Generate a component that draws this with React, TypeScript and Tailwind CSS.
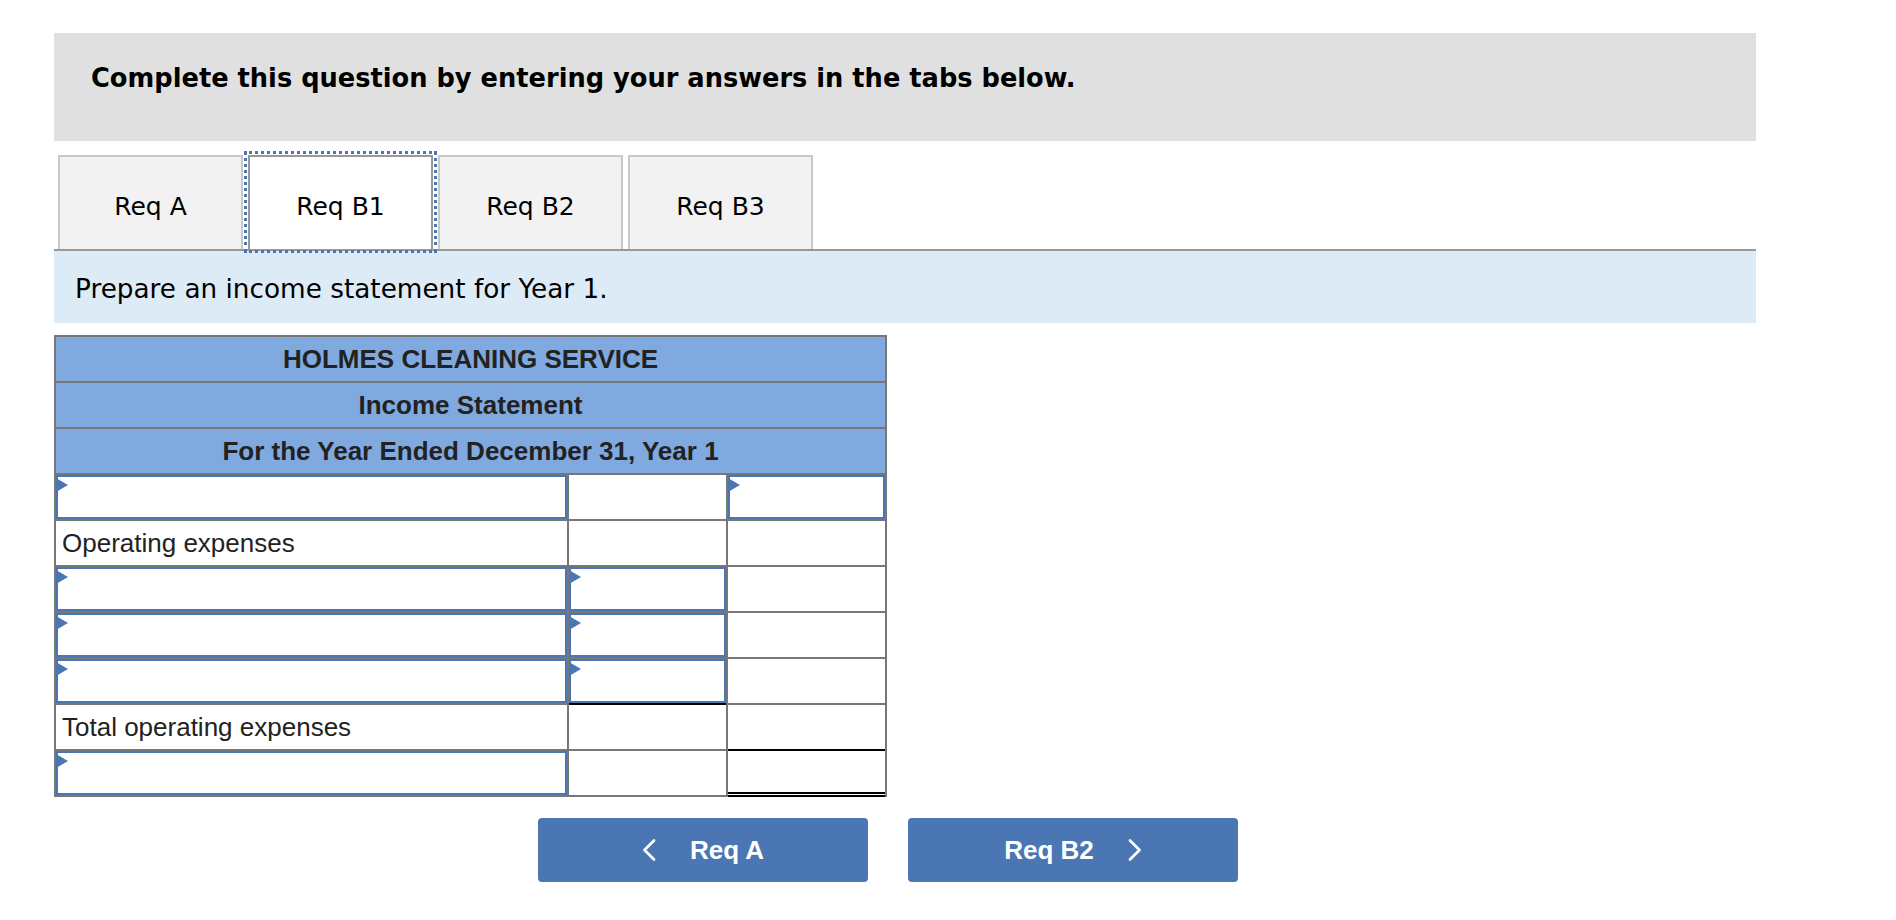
import React from 'react';

const tabs = ['Req A', 'Req B1', 'Req B2', 'Req B3'];

type Cell = 'input' | 'empty' | string;

interface Row {
  cells: [Cell, Cell, Cell];
  // black rule above the 2nd / 3rd column, double rule under the 3rd
  ruleTop?: 1 | 2;
  doubleUnder?: boolean;
}

const rows: Row[] = [
  { cells: ['input', 'empty', 'input'] },
  { cells: ['Operating expenses', 'empty', 'empty'] },
  { cells: ['input', 'input', 'empty'] },
  { cells: ['input', 'input', 'empty'] },
  { cells: ['input', 'input', 'empty'] },
  { cells: ['Total operating expenses', 'empty', 'empty'], ruleTop: 1 },
  { cells: ['input', 'empty', 'empty'], ruleTop: 2, doubleUnder: true },
];

function InputCell() {
  return (
    <div className="relative h-[44px] bg-white border-2 border-[#4a76b4]">
      <span className="absolute -left-[2px] top-[1px] w-0 h-0 border-t-[7px] border-b-[7px] border-t-transparent border-b-transparent border-l-[12px] border-l-[#4a76b4]" />
    </div>
  );
}

function ChevronLeft() {
  return (
    <svg width="14" height="22" viewBox="0 0 14 22" fill="none" stroke="white" strokeWidth="2.6" strokeLinecap="round" strokeLinejoin="round">
      <polyline points="12,1.5 2.5,11 12,20.5" />
    </svg>
  );
}

function ChevronRight() {
  return (
    <svg width="14" height="22" viewBox="0 0 14 22" fill="none" stroke="white" strokeWidth="2.6" strokeLinecap="round" strokeLinejoin="round">
      <polyline points="2,1.5 11.5,11 2,20.5" />
    </svg>
  );
}

export default function App() {
  return (
    <div className="min-h-screen bg-white pt-[33px] pl-[54px] text-[#222]">
      <div className="w-[1702px]">
        {/* instruction bar */}
        <div className="h-[108px] bg-[#e0e0e0] pl-[37px] pt-[30px]">
          <p className="font-['DejaVu_Sans',Verdana,sans-serif] font-bold text-[25.7px] leading-[30px] text-black">
            Complete this question by entering your answers in the tabs below.
          </p>
        </div>

        {/* tabs */}
        <div className="mt-[14px] flex gap-[5px] pl-[4px]">
          {tabs.map((t) => {
            const active = t === 'Req B1';
            return (
              <button
                key={t}
                className={
                  active
                    ? "w-[185px] h-[94px] pt-[7px] flex items-center justify-center bg-white border-2 border-b-0 border-[#999] outline-3 outline-dotted outline-[#4a76b4] outline-offset-1 font-['DejaVu_Sans',Verdana,sans-serif] text-[25px] text-black"
                    : "w-[185px] h-[94px] pt-[7px] flex items-center justify-center bg-[#f2f2f2] border-2 border-b-0 border-[#c8c8c8] font-['DejaVu_Sans',Verdana,sans-serif] text-[25px] text-black"
                }
              >
                {t}
              </button>
            );
          })}
        </div>
        <div className="h-[2px] bg-[#999]" />

        {/* prompt */}
        <div className="h-[72px] bg-[#ddebf7] flex items-center pl-[21px] pt-[5px]">
          <p className="font-['DejaVu_Sans',Verdana,sans-serif] text-[26.3px] text-black">
            Prepare an income statement for Year 1.
          </p>
        </div>

        {/* statement */}
        <div className="mt-[12px] w-[833px] border-2 border-[#777] bg-[#777] grid grid-cols-[511px_157px_157px] gap-[2px] font-['Liberation_Sans',Arial,sans-serif] text-[26px]">
          {['HOLMES CLEANING SERVICE', 'Income Statement', 'For the Year Ended December 31, Year 1'].map((h) => (
            <div key={h} className="col-span-3 h-[44px] bg-[#80a9df] flex items-center justify-center font-bold text-[#222]">
              {h}
            </div>
          ))}

          {rows.map((row, ri) =>
            row.cells.map((c, ci) => {
              const key = `${ri}-${ci}`;
              if (c === 'input') return <InputCell key={key} />;
              if (c === 'empty') {
                const rule = row.ruleTop === ci;
                if (row.doubleUnder && ci === 2) {
                  return (
                    <div key={key} className="h-[44px] bg-white flex flex-col justify-end shadow-[0_-2px_0_0_#000,0_2px_0_0_#000]">
                      <div className="h-[2px] bg-black mb-[1px]" />
                    </div>
                  );
                }
                return (
                  <div
                    key={key}
                    className={rule ? 'h-[44px] bg-white shadow-[0_-2px_0_0_#000]' : 'h-[44px] bg-white'}
                  />
                );
              }
              return (
                <div key={key} className="h-[44px] bg-white flex items-center pl-[6px] text-[#222]">
                  {c}
                </div>
              );
            })
          )}
        </div>

        {/* navigation */}
        <div className="mt-[21px] pl-[484px] flex gap-[40px] font-['Liberation_Sans',Arial,sans-serif]">
          <button className="w-[330px] h-[64px] rounded-[4px] bg-[#4a76b4] text-white font-bold text-[26px] flex items-center justify-center gap-[34px]">
            <ChevronLeft />
            <span>Req A</span>
          </button>
          <button className="w-[330px] h-[64px] rounded-[4px] bg-[#4a76b4] text-white font-bold text-[26px] flex items-center justify-center gap-[34px]">
            <span>Req B2</span>
            <ChevronRight />
          </button>
        </div>
      </div>
    </div>
  );
}
